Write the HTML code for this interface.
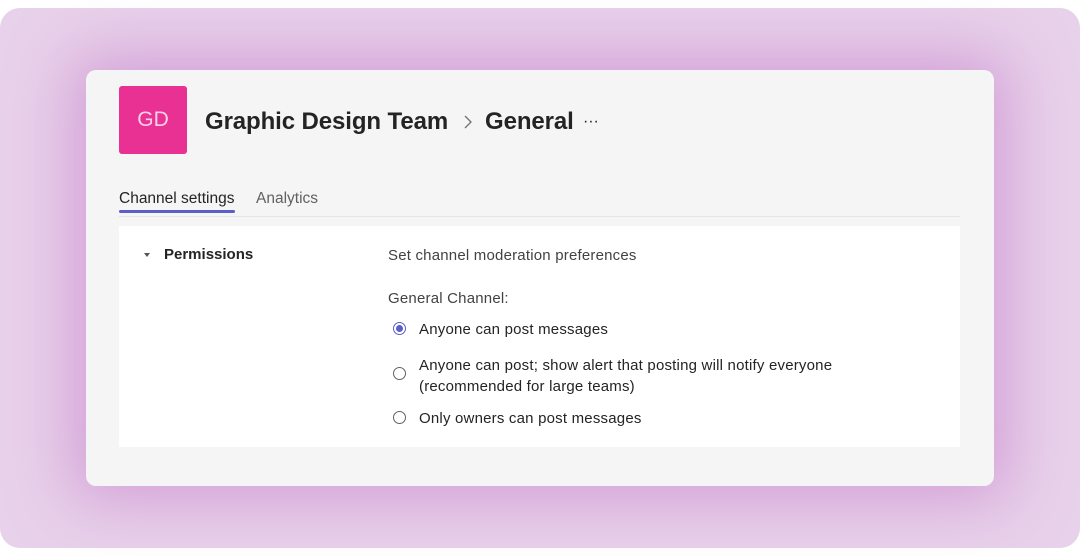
<!DOCTYPE html>
<html><head><style>
body{margin:0;width:1080px;height:556px;background:#fff;font-family:"Liberation Sans",sans-serif;position:relative;overflow:hidden}
.bg{position:absolute;left:0;top:8px;width:1080px;height:540px;border-radius:20px;background:#e8d1ea}
.card{position:absolute;left:86px;top:70px;width:908px;height:416px;border-radius:10px;background:#f5f5f5;box-shadow:0 0 60px 15px rgba(195,120,200,.55)}
.av{position:absolute;left:33px;top:16px;width:68px;height:68px;background:#e93193;border-radius:3px;color:#f9d0e6;font-size:21px;line-height:68px;text-align:center}
.t{position:absolute;top:38px;font-size:24px;font-weight:bold;color:#242424;letter-spacing:-.1px}
.tab{position:absolute;top:120px;font-size:15.5px}
.panel{position:absolute;left:33px;top:156px;width:841px;height:221px;background:#fff}
.s{position:absolute;font-size:15px;letter-spacing:.2px;color:#424242}
.r{position:absolute;left:274px;width:11px;height:11px;border:1px solid #616161;border-radius:50%}
</style></head><body>
<div class="bg"></div>
<div class="card">
<div class="av">GD</div>
<div class="t" style="left:119px">Graphic Design Team</div>
<svg style="position:absolute;left:377px;top:45px" width="10" height="14"><path d="M2 1l6 6-6 6" fill="none" stroke="#707070" stroke-width="1.3"/></svg>
<div class="t" style="left:399px">General</div>
<div class="t" style="left:497px;font-size:16px;top:43px;font-weight:normal">···</div>
<div class="tab" style="left:33px;color:#242424">Channel settings</div>
<div style="position:absolute;left:33px;top:140px;width:116px;height:3px;background:#5b5fc7;border-radius:2px"></div>
<div class="tab" style="left:170px;color:#616161">Analytics</div>
<div style="position:absolute;left:33px;top:146px;width:841px;height:1px;background:#e6e6e6"></div>
<div class="panel">
<div style="position:absolute;left:25px;top:27px;border-left:3.5px solid transparent;border-right:3.5px solid transparent;border-top:4px solid #555"></div>
<div class="s" style="left:45px;top:20px;font-weight:bold;color:#242424;letter-spacing:0">Permissions</div>
<div class="s" style="left:269px;top:21px">Set channel moderation preferences</div>
<div class="s" style="left:269px;top:64px">General Channel:</div>
<div class="r" style="top:96px;border-color:#5b5fc7"><div style="margin:2px;width:7px;height:7px;border-radius:50%;background:#5b5fc7"></div></div>
<div class="s" style="left:300px;top:95px;color:#242424">Anyone can post messages</div>
<div class="r" style="top:141px"></div>
<div class="s" style="left:300px;top:129px;color:#242424;line-height:21px">Anyone can post; show alert that posting will notify everyone<br>(recommended for large teams)</div>
<div class="r" style="top:185px"></div>
<div class="s" style="left:300px;top:184px;color:#242424">Only owners can post messages</div>
</div>
</div>
</body></html>
